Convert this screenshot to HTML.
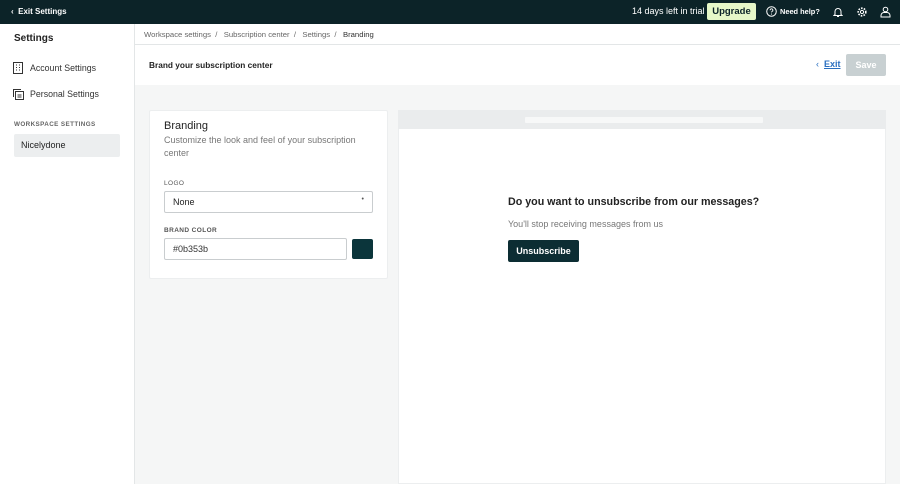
<!DOCTYPE html>
<html><head><style>
*{box-sizing:border-box;margin:0;padding:0}
body{width:900px;height:484px;overflow:hidden;font-family:"Liberation Sans",sans-serif;background:#f5f6f6;position:relative;color:#222}
.a{position:absolute}
</style></head><body>
<div class="a" style="left:0;top:0;width:900px;height:24px;background:#0c2328"></div>
<div class="a" style="left:11px;top:7px;color:#fff;font-size:8px;font-weight:bold">‹&nbsp; Exit Settings</div>
<div class="a" style="left:632px;top:6px;color:#fff;font-size:9px">14 days left in trial</div>
<div class="a" style="left:707px;top:3px;width:49px;height:17px;background:#e6f7c8;border-radius:2px;font-size:9.5px;font-weight:bold;color:#0c2328;text-align:center;line-height:17px">Upgrade</div>
<svg class="a" style="left:766px;top:6px" width="11" height="11" viewBox="0 0 12 12"><circle cx="6" cy="6" r="5.2" fill="none" stroke="#fff" stroke-width="1.1"/><path d="M4.5 4.6a1.5 1.5 0 1 1 2 1.4c-.5.2-.5.6-.5 1" fill="none" stroke="#fff" stroke-width="1"/><circle cx="6" cy="8.8" r=".6" fill="#fff"/></svg>
<div class="a" style="left:780px;top:7px;color:#fff;font-size:7.4px;font-weight:bold">Need help?</div>
<svg class="a" style="left:833px;top:7px" width="10" height="11" viewBox="0 0 10 11"><path d="M2 7.5V4.5a3 3 0 0 1 6 0v3l1 1H1z M4 9.5h2" fill="none" stroke="#fff" stroke-width="1"/></svg>
<svg class="a" style="left:856px;top:6px" width="12" height="12" viewBox="0 0 12 12"><circle cx="6" cy="6" r="3.8" fill="none" stroke="#fff" stroke-width="1.6" stroke-dasharray="1.6 1.2"/><circle cx="6" cy="6" r="1.6" fill="none" stroke="#fff" stroke-width="1"/></svg>
<svg class="a" style="left:880px;top:6px" width="11" height="12" viewBox="0 0 11 12"><circle cx="5.5" cy="3.5" r="2.3" fill="none" stroke="#fff" stroke-width="1"/><path d="M1 11v-1.5a3 3 0 0 1 3-3h3a3 3 0 0 1 3 3V11z" fill="none" stroke="#fff" stroke-width="1"/></svg>

<div class="a" style="left:0;top:24px;width:135px;height:460px;background:#fff;border-right:1px solid #e3e6e7"></div>
<div class="a" style="left:14px;top:33px;font-size:10px;font-weight:bold;color:#222">Settings</div>
<svg class="a" style="left:13px;top:62px" width="10" height="12" viewBox="0 0 10 12"><rect x=".5" y=".5" width="9" height="11" fill="none" stroke="#333"/><path d="M3 3h1M6 3h1M3 5.5h1M6 5.5h1M3 8h1M6 8h1" stroke="#333"/></svg>
<div class="a" style="left:30px;top:63px;font-size:8.8px;color:#333">Account Settings</div>
<svg class="a" style="left:13px;top:89px" width="11" height="11" viewBox="0 0 11 11"><path d="M.5 8V.5H8" fill="none" stroke="#333"/><rect x="2.5" y="2.5" width="8" height="8" fill="none" stroke="#333"/><path d="M4.5 6h4M4.5 8h4" stroke="#333"/></svg>
<div class="a" style="left:30px;top:89px;font-size:8.8px;color:#333">Personal Settings</div>
<div class="a" style="left:14px;top:121px;font-size:6.3px;font-weight:bold;color:#666;letter-spacing:.4px">WORKSPACE SETTINGS</div>
<div class="a" style="left:14px;top:134px;width:106px;height:23px;background:#eceeef;border-radius:2px;font-size:9px;color:#222;padding:6px 0 0 7px">Nicelydone</div>

<div class="a" style="left:135px;top:24px;width:765px;height:21px;background:#fff;border-bottom:1px solid #e3e6e7"></div>
<div class="a" style="left:144px;top:30px;font-size:7.7px;color:#666;white-space:pre">Workspace settings  /   Subscription center  /   Settings  /   <span style="color:#333">Branding</span></div>
<div class="a" style="left:135px;top:45px;width:765px;height:40px;background:#fff"></div>
<div class="a" style="left:149px;top:60px;font-size:8.3px;font-weight:bold;color:#222">Brand your subscription center</div>
<div class="a" style="left:816px;top:59px;font-size:9px;color:#2a6fc0"><span>‹</span>&nbsp; <span style="text-decoration:underline;font-weight:bold">Exit</span></div>
<div class="a" style="left:846px;top:54px;width:40px;height:22px;background:#c8d0d2;border-radius:2px;color:#fff;font-size:9px;font-weight:bold;text-align:center;line-height:22px">Save</div>

<div class="a" style="left:149px;top:110px;width:239px;height:169px;background:#fff;border:1px solid #eceeef;border-radius:2px"></div>
<div class="a" style="left:164px;top:120px;font-size:11px;color:#222">Branding</div>
<div class="a" style="left:164px;top:134px;width:200px;font-size:9px;line-height:13px;color:#777">Customize the look and feel of your subscription center</div>
<div class="a" style="left:164px;top:180px;font-size:6.5px;color:#555;letter-spacing:.4px">LOGO</div>
<div class="a" style="left:164px;top:191px;width:209px;height:22px;border:1px solid #c9cdcf;border-radius:2px;font-size:9px;color:#222;padding:5px 0 0 8px">None<span style="position:absolute;right:8px;top:4px;font-size:7px;color:#555">•</span></div>
<div class="a" style="left:164px;top:227px;font-size:6.5px;color:#555;letter-spacing:.4px;font-weight:bold">BRAND COLOR</div>
<div class="a" style="left:164px;top:238px;width:183px;height:22px;border:1px solid #c9cdcf;border-radius:2px;font-size:9px;color:#333;padding:5px 0 0 8px">#0b353b</div>
<div class="a" style="left:352px;top:239px;width:21px;height:20px;background:#0b353b;border-radius:2px"></div>

<div class="a" style="left:398px;top:110px;width:488px;height:374px;background:#fff;border:1px solid #eceeef"></div>
<div class="a" style="left:398px;top:110px;width:488px;height:19px;background:#eaeced"></div>
<div class="a" style="left:525px;top:117px;width:238px;height:6px;background:#f7f8f8;border-radius:1px"></div>
<div class="a" style="left:508px;top:196px;font-size:10.7px;font-weight:bold;color:#222">Do you want to unsubscribe from our messages?</div>
<div class="a" style="left:508px;top:219px;font-size:9px;color:#777">You'll stop receiving messages from us</div>
<div class="a" style="left:508px;top:240px;width:71px;height:22px;background:#0c2d33;border-radius:2px;color:#fff;font-size:9px;font-weight:bold;text-align:center;line-height:22px">Unsubscribe</div>
</body></html>
